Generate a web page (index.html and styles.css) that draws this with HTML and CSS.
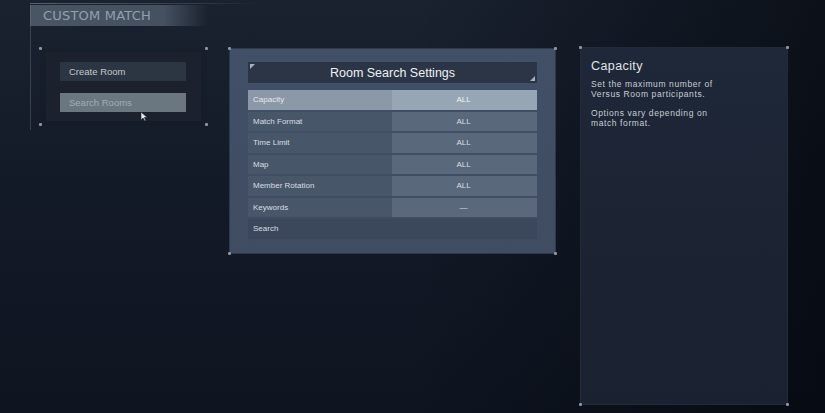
FILE: index.html
```html
<!DOCTYPE html>
<html>
<head>
<meta charset="utf-8">
<link rel="stylesheet" href="styles.css">
</head>
<body>
<div class="screen">
  <div class="topline"></div>
  <div class="header"><span class="header-title">CUSTOM MATCH</span></div>
  <div class="main">
    <div class="frame-left">
      <div class="panel-left dotted">
        <i class="dot tl"></i><i class="dot tr"></i><i class="dot bl"></i><i class="dot br"></i>
        <div class="menu">
          <div class="menu-btn">Create Room</div>
          <div class="menu-btn active">Search Rooms</div>
        </div>
        <svg class="cursor" width="8" height="11" viewBox="0 0 8 11"><path d="M1 1 L1 9 L3 7 L5 10 L6 9.4 L4.3 6.5 L7 6.3 Z" fill="#e8ecef" stroke="#1b222c" stroke-width="0.6"/></svg>
      </div>
    </div>
    <div class="panel-mid dotted">
      <i class="dot tl"></i><i class="dot tr"></i><i class="dot bl"></i><i class="dot br"></i>
      <div class="settings-head">
        <span class="tri tri-tl"></span>
        Room Search Settings
        <span class="tri tri-br"></span>
      </div>
      <div class="rows">
        <div class="row selected"><div class="lbl">Capacity</div><div class="val">ALL</div></div>
        <div class="row"><div class="lbl">Match Format</div><div class="val">ALL</div></div>
        <div class="row"><div class="lbl">Time Limit</div><div class="val">ALL</div></div>
        <div class="row"><div class="lbl">Map</div><div class="val">ALL</div></div>
        <div class="row"><div class="lbl">Member Rotation</div><div class="val">ALL</div></div>
        <div class="row"><div class="lbl">Keywords</div><div class="val">—</div></div>
        <div class="row search"><div class="lbl">Search</div></div>
      </div>
    </div>
    <div class="panel-right dotted">
      <i class="dot tl"></i><i class="dot tr"></i><i class="dot bl"></i><i class="dot br"></i>
      <div class="info-title">Capacity</div>
      <p class="info-text">Set the maximum number of<br>Versus Room participants.</p>
      <p class="info-text">Options vary depending on<br>match format.</p>
    </div>
  </div>
</div>
</body>
</html>
```

FILE: styles.css
```css
* { box-sizing: border-box; }
html, body { margin: 0; padding: 0; }
body {
  width: 825px;
  height: 413px;
  overflow: hidden;
  font-family: "Liberation Sans", Arial, sans-serif;
  background:
    linear-gradient(90deg, rgba(0,0,0,0) 0%, rgba(0,0,0,0) 50%, rgba(2,5,10,0.6) 100%),
    linear-gradient(180deg, #1a2230 0%, #141b28 40%, #0e1420 100%);
}
.screen { position: relative; width: 825px; height: 413px; padding-top: 3px; }
.topline {
  margin-left: 30px;
  width: 230px;
  height: 1px;
  background: linear-gradient(90deg, rgba(150,165,180,0.5), rgba(150,165,180,0.2) 70%, rgba(150,165,180,0));
}
.header {
  margin-left: 30px;
  margin-top: 1px;
  height: 21px;
  width: 178px;
  padding-left: 12px;
  display: flex;
  align-items: center;
  background: linear-gradient(90deg, #4a5564 0%, #455060 75%, rgba(70,80,96,0) 100%);
  border-left: 1px solid #5a6472;
}
.header-title {
  font-family: "DejaVu Sans", sans-serif;
  font-size: 13px;
  letter-spacing: 0.2px;
  color: #93a0ae;
}
.main {
  display: flex;
  align-items: flex-start;
  margin-top: 22px;
}
.frame-left {
  margin-left: 30px;
  margin-top: -22px;
  padding-top: 22px;
  padding-left: 9px;
  border-left: 1px solid rgba(90,100,115,0.5);
  height: 104px;
}
.dotted { position: relative; }
.dot {
  position: absolute;
  width: 3px; height: 3px;
  background: #8a94a0;
  border-radius: 1px;
}
.dot.tl { left: -1px; top: -1px; }
.dot.tr { right: -1px; top: -1px; }
.dot.bl { left: -1px; bottom: -1px; }
.dot.br { right: -1px; bottom: -1px; }

.panel-left {
  width: 167px;
  height: 77px;
  padding: 4px 6px;
  background: rgba(20,26,36,0.25);
}
.menu {
  height: 69px;
  background: #1b222d;
  padding: 10px 14px 0 14px;
  display: flex;
  flex-direction: column;
  gap: 12px;
}
.menu-btn {
  width: 126px;
  height: 19px;
  background: #2c3542;
  color: #c3c9cf;
  font-size: 9.5px;
  display: flex;
  align-items: center;
  padding-left: 9px;
}
.menu-btn.active {
  background: #6a7680;
  color: #a3adb5;
}
.cursor { position: absolute; left: 100px; top: 63px; }

.panel-mid {
  margin-left: 22px;
  width: 327px;
  height: 206px;
  padding: 14px 19px 0 19px;
  background: linear-gradient(180deg, #425067 0%, #3f4c62 100%);
  box-shadow: inset 0 0 0 1px #2e394a;
}
.settings-head {
  position: relative;
  height: 21px;
  background: #2b3546;
  color: #eef1f4;
  font-size: 12.5px;
  display: flex;
  align-items: center;
  justify-content: center;
}
.tri { position: absolute; width: 0; height: 0; }
.tri-tl {
  left: 2px; top: 2px;
  border-top: 5px solid #a9b2bc;
  border-right: 5px solid transparent;
}
.tri-br {
  right: 2px; bottom: 2px;
  border-bottom: 5px solid #a9b2bc;
  border-left: 5px solid transparent;
}
.rows {
  margin-top: 7px;
  display: flex;
  flex-direction: column;
  gap: 2px;
}
.row {
  display: flex;
  height: 19.5px;
  font-size: 8px;
  color: #d8dee5;
}
.row .lbl {
  width: 144px;
  background: #48566a;
  display: flex;
  align-items: center;
  padding-left: 5px;
}
.row .val {
  width: 145px;
  background: #5a687b;
  display: flex;
  align-items: center;
  justify-content: center;
  padding-right: 2px;
}
.row.selected .lbl { background: #8a98a8; color: #e4e9ee; }
.row.selected .val { background: #97a6b5; color: #eef2f5; }
.row.search .lbl { width: 289px; background: #3b485b; }

.panel-right {
  margin-left: 24px;
  margin-top: -1px;
  width: 208px;
  height: 358px;
  padding: 12px 11px;
  background: linear-gradient(180deg, #1f2838 0%, #1c2434 50%, #1a2131 100%);
  box-shadow: inset 0 0 0 1px #222b3a;
}
.info-title {
  font-size: 12.5px;
  color: #e0e4e8;
  letter-spacing: 0.4px;
  margin-bottom: 6px;
}
.info-text {
  margin: 0 0 9px 0;
  font-size: 8.5px;
  line-height: 10px;
  letter-spacing: 0.6px;
  color: #c8ced4;
}
```
